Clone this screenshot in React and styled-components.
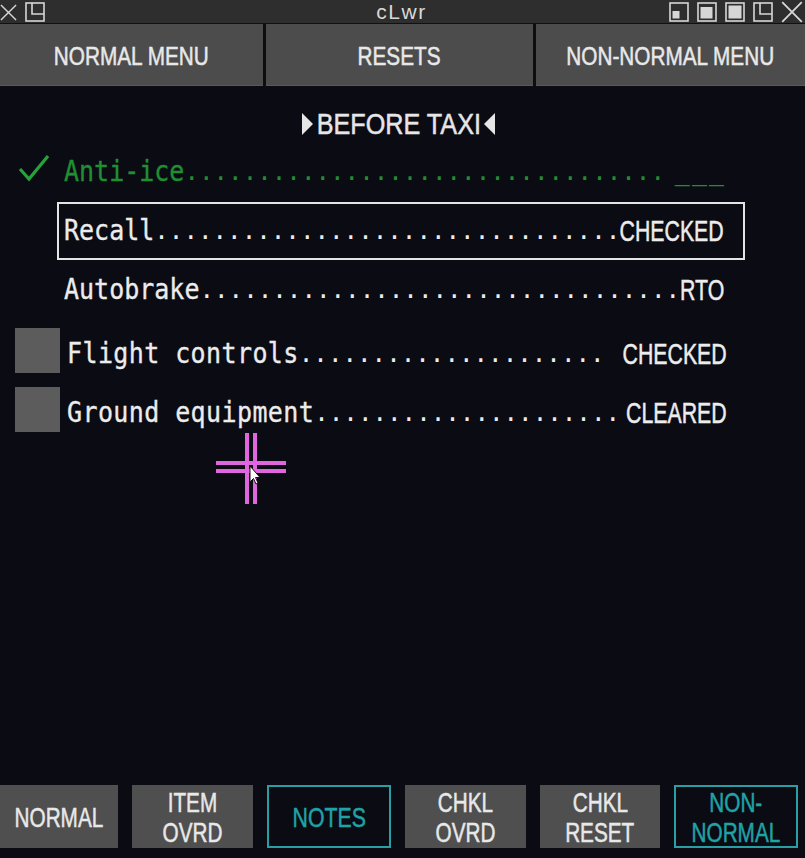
import React from "react";
import styled, { createGlobalStyle } from "styled-components";

const GlobalStyle = createGlobalStyle`
  html, body { margin: 0; padding: 0; background: #0b0b13; }
  body { width: 805px; height: 858px; overflow: hidden; }
  * { box-sizing: border-box; }
`;

const SANS = `"Liberation Sans", Arial, sans-serif`;
const MONO = `"DejaVu Sans Mono", "Liberation Mono", monospace`;

const Screen = styled.div`
  width: 805px;
  height: 858px;
  display: flex;
  flex-direction: column;
  background: #0b0b13;
  position: relative;
  overflow: hidden;
`;

const TitleBar = styled.div`
  height: 24px;
  background: #2e2e2e;
  border-bottom: 1px solid #111;
  display: grid;
  grid-template-columns: 1fr auto 1fr;
  align-items: center;
  padding: 0 2px 0 0;
`;

const TitleText = styled.div`
  font-family: ${SANS};
  font-size: 21px;
  line-height: 24px;
  letter-spacing: 1.5px;
  color: #d8d8d8;
`;

const IconGroup = styled.div`
  display: flex;
  align-items: center;
  gap: ${(p) => p.$gap}px;
  justify-self: ${(p) => p.$side};
`;

/* condensed lettering: the cockpit font is narrow, so the sans is squeezed */
const Squeeze = styled.span`
  display: inline-block;
  white-space: nowrap;
  -webkit-text-stroke: 0.5px currentColor;
  transform: scaleX(${(p) => p.$s});
  transform-origin: ${(p) => p.$origin || "center"};
`;

const MenuBar = styled.div`
  height: 62px;
  display: flex;
  gap: 3px;
  background: #0e0e0e;
`;

const MenuButton = styled.div`
  flex: ${(p) => p.$w} 0 0;
  background: #4c4c4c;
  display: flex;
  align-items: center;
  justify-content: center;
  padding-top: 4px;
  font-family: ${SANS};
  font-size: 25px;
  color: #e8e8e8;
  border-bottom: 1px solid #5a5a5a;
`;

const Content = styled.div`
  flex: 1;
  display: flex;
  flex-direction: column;
  padding: 20px 0 0 15px;
`;

const Heading = styled.div`
  height: 36px;
  display: flex;
  align-items: center;
  justify-content: center;
  margin: 0 8px 0 -15px;
  font-family: ${SANS};
  font-size: 30px;
  color: #e6e6e6;
`;

const TriWrap = styled.span`
  display: flex;
  margin: 0 ${(p) => (p.$left ? -13 : 0)}px 0 ${(p) => (p.$left ? 0 : -13)}px;
`;

const Row = styled.div`
  height: 59px;
  display: flex;
  align-items: center;
  margin-top: ${(p) => p.$mt || 0}px;
`;

const Marker = styled.div`
  width: ${(p) => p.$w}px;
  height: 45px;
  flex: none;
  align-self: flex-start;
  margin-top: 4px;
  display: flex;
  align-items: center;
  padding-left: 3px;
`;

const Box = styled.div`
  width: 45px;
  height: 45px;
  margin-left: -3px;
  background: #5c5c5c;
`;

const Body = styled.div`
  width: 688px;
  height: 58px;
  flex: none;
  display: flex;
  align-items: center;
  border: 2px solid ${(p) => (p.$current ? "#e4e4e4" : "transparent")};
  padding: 0 19px 0 5px;
  color: ${(p) => (p.$done ? "#1f8f32" : "#ececec")};
`;

const Label = styled.span`
  display: inline-block;
  font-family: ${MONO};
  font-size: 25px;
  white-space: pre;
  letter-spacing: ${(p) => p.$ls || 0}px;
  -webkit-text-stroke: 0.3px currentColor;
  transform: scaleY(1.1);
`;

const Leader = styled.span`
  flex: 1;
  min-width: 0;
  white-space: nowrap;
  font-family: ${MONO};
  font-size: 24.2px;
`;

const Value = styled.span`
  width: ${(p) => p.$w}px;
  flex: none;
  display: flex;
  justify-content: flex-end;
  font-family: ${SANS};
  font-size: 30px;
`;

const Pending = styled.span`
  display: inline-block;
  font-family: ${MONO};
  font-size: 25px;
  white-space: pre;
  letter-spacing: 2px;
  margin-right: -2px;
  transform: translateY(-5px) scaleY(1.4);
`;

const BottomBar = styled.div`
  display: flex;
  gap: 14px;
  padding-bottom: 10px;
`;

const SoftKey = styled.div`
  width: ${(p) => p.$w}px;
  height: 63px;
  flex: none;
  display: flex;
  flex-direction: column;
  align-items: center;
  justify-content: center;
  text-align: center;
  font-family: ${SANS};
  font-size: 28px;
  line-height: 30px;
  padding-top: 2px;
  background: ${(p) => (p.$active ? "#0b0b13" : "#4f4f4f")};
  color: ${(p) => (p.$active ? "#1fa3a6" : "#e8e8e8")};
  border: 2px solid ${(p) => (p.$active ? "#2a9fa3" : "#4f4f4f")};
`;

const Cursor = styled.svg`
  position: absolute;
  left: 214px;
  top: 432px;
`;

const ICON = "#d6d6d6";

const XIcon = ({ size = 18 }) => (
  <svg width={size} height={size} viewBox="0 0 18 18">
    <path d="M1 1 L17 17 M17 1 L1 17" stroke={ICON} strokeWidth="1.5" fill="none" />
  </svg>
);

const FrameIcon = ({ fill }) => (
  <svg width="20" height="20" viewBox="0 0 20 20">
    <rect x="1" y="1" width="18" height="18" fill="none" stroke={ICON} strokeWidth="1.6" />
    {fill === "small" && <rect x="3.5" y="9" width="7" height="7.5" fill={ICON} />}
    {fill === "mid" && <rect x="3.5" y="5" width="12" height="11.5" fill={ICON} />}
    {fill === "full" && <rect x="3.5" y="3.5" width="13" height="13" fill={ICON} />}
    {fill === "corner" && <path d="M7 1 V12 H19" fill="none" stroke={ICON} strokeWidth="1.6" />}
  </svg>
);

const Check = () => (
  <svg width="32" height="30" viewBox="0 0 32 30">
    <path d="M2 15 L11 25 L30 2" stroke="#25a33a" strokeWidth="3.2" fill="none" />
  </svg>
);

const Tri = ({ dir }) => (
  <svg width="13" height="24" viewBox="0 0 13 24">
    {dir === "right" ? (
      <path d="M1 1 L12 12 L1 23 Z" fill="#e6e6e6" />
    ) : (
      <path d="M12 1 L1 12 L12 23 Z" fill="#e6e6e6" />
    )}
  </svg>
);

function Item({ label, value, valueWidth, dots, done, current, box, check, mt, ls, pending }) {
  return (
    <Row $mt={mt}>
      <Marker $w={box ? 45 : 42}>
        {check && <Check />}
        {box && <Box />}
      </Marker>
      <Body $current={current} $done={done}>
        <Label $ls={ls}>{label}</Label>
        <Leader>{".".repeat(dots)}</Leader>
        {pending ? (
          <Pending>{value}</Pending>
        ) : (
          <Value $w={valueWidth}>
            <Squeeze $s={0.71} $origin="right">{value}</Squeeze>
          </Value>
        )}
      </Body>
    </Row>
  );
}

const Key = ({ lines, w, active, s = 0.74 }) => (
  <SoftKey $w={w} $active={active}>
    {lines.map((l) => (
      <Squeeze key={l} $s={s}>{l}</Squeeze>
    ))}
  </SoftKey>
);

export default function App() {
  return (
    <Screen>
      <GlobalStyle />
      <TitleBar>
        <IconGroup $gap={8} $side="start">
          <XIcon size={17} />
          <FrameIcon fill="corner" />
        </IconGroup>
        <TitleText>cLwr</TitleText>
        <IconGroup $gap={8} $side="end">
          <FrameIcon fill="small" />
          <FrameIcon fill="mid" />
          <FrameIcon fill="full" />
          <FrameIcon fill="corner" />
          <XIcon size={22} />
        </IconGroup>
      </TitleBar>
      <MenuBar>
        <MenuButton $w={263}><Squeeze $s={0.83}>NORMAL MENU</Squeeze></MenuButton>
        <MenuButton $w={267}><Squeeze $s={0.83}>RESETS</Squeeze></MenuButton>
        <MenuButton $w={269}><Squeeze $s={0.83}>NON-NORMAL MENU</Squeeze></MenuButton>
      </MenuBar>
      <Content>
        <Heading>
          <TriWrap $left><Tri dir="right" /></TriWrap>
          <Squeeze $s={0.84}>BEFORE TAXI</Squeeze>
          <TriWrap><Tri dir="left" /></TriWrap>
        </Heading>
        <Item label="Anti-ice" value="___" dots={33} done check pending />
        <Item label="Recall" value="CHECKED" valueWidth={101} dots={32} current />
        <Item label="Autobrake" value="RTO" valueWidth={43} dots={33} />
        <Item label="Flight controls" value="CHECKED" valueWidth={104} dots={21} box mt={5} ls={0.4} />
        <Item label="Ground equipment" value="CLEARED" valueWidth={104} dots={21} box ls={0.4} />
      </Content>
      <BottomBar>
        <Key w={118} lines={["NORMAL"]} />
        <Key w={121} lines={["ITEM", "OVRD"]} />
        <Key w={124} lines={["NOTES"]} active s={0.76} />
        <Key w={121} lines={["CHKL", "OVRD"]} />
        <Key w={120} lines={["CHKL", "RESET"]} />
        <Key w={124} lines={["NON-", "NORMAL"]} active />
      </BottomBar>
      <Cursor width="74" height="74" viewBox="0 0 74 74">
        <rect x="31" y="1" width="4" height="71" fill="#e066e0" />
        <rect x="39" y="1" width="4" height="71" fill="#e066e0" />
        <rect x="2" y="29" width="70" height="4" fill="#e066e0" />
        <rect x="2" y="37" width="70" height="4" fill="#e066e0" />
        <path d="M36 34 L36 50 L39.5 46.5 L42 52 L44 51 L41.5 45.5 L46 45.5 Z" fill="#fff" stroke="#111" strokeWidth="1" />
      </Cursor>
    </Screen>
  );
}
